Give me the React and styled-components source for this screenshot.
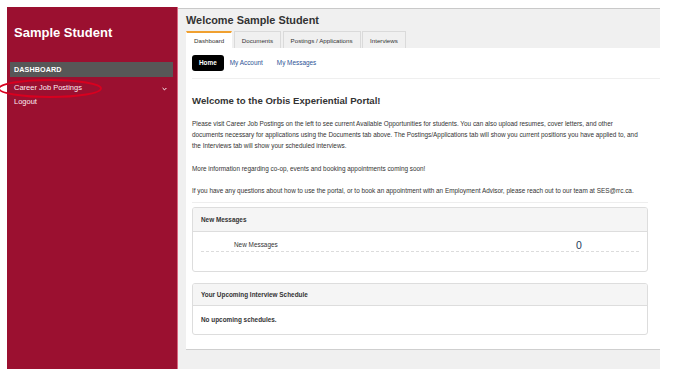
import React from "react";
import styled, { createGlobalStyle } from "styled-components";

const GlobalStyle = createGlobalStyle`
  html, body { margin: 0; padding: 0; background: #ffffff; }
  body { font-family: "Liberation Sans", Arial, sans-serif; color: #333; }
  * { box-sizing: border-box; }
`;

const Page = styled.div`
  position: relative;
  display: flex;
  align-items: stretch;
  height: 369px;
  padding: 7px 0 0 7px;
  overflow: hidden;
`;

const Sidebar = styled.aside`
  width: 171px;
  flex: none;
  background: #9b1030;
  border-right: 1px solid #d9677f;
  color: #fff;
`;

const SideTitle = styled.h1`
  margin: 0;
  padding: 19px 7px 0;
  font-size: 13px;
  line-height: 14px;
  font-weight: bold;
  color: #fff;
`;

const SideSection = styled.div`
  margin: 22px 4px 3px 3px;
  height: 15px;
  background: #575757;
  padding-left: 4px;
  font-size: 7.2px;
  line-height: 15px;
  font-weight: bold;
  letter-spacing: 0.1px;
  color: #fff;
`;

const SideLink = styled.a`
  display: flex;
  align-items: center;
  justify-content: space-between;
  height: 14px;
  padding: 0 10px 0 7px;
  font-size: 7.5px;
  color: #fbeef1;
  text-decoration: none;
`;

const Chevron = styled.svg`
  width: 5px;
  height: 4px;
  margin-top: 3px;
`;

const Annotation = styled.svg`
  position: absolute;
  left: -6px;
  top: 78px;
  width: 110px;
  height: 21px;
  pointer-events: none;
`;

const Main = styled.main`
  width: 482px;
  flex: none;
  margin-top: 1px;
  background: #f0f0f0;
  border-top: 1px solid #c9c9c9;
  padding-left: 8px;
  display: flex;
  flex-direction: column;
`;

const PageTitle = styled.h2`
  margin: 0;
  padding-top: 4px;
  font-size: 10.9px;
  line-height: 14px;
  font-weight: bold;
  color: #333;
`;

const Tabs = styled.nav`
  display: flex;
  gap: 1.5px;
  margin-top: 4px;
  height: 17px;
`;

const Tab = styled.div`
  height: 17px;
  padding: 0 7px;
  font-size: 6.2px;
  line-height: ${(p) => (p.$active ? "16px" : "18px")};
  color: #333;
  background: ${(p) => (p.$active ? "#fff" : "#f0f0f0")};
  border: 1px solid #dadada;
  border-bottom: none;
  border-top: ${(p) => (p.$active ? "2px solid #f0a030" : "1px solid #dadada")};
  ${(p) => p.$active && "border-left-color: #fff; border-right-color: #fff;"}
`;

const Panel = styled.section`
  background: #fff;
  height: 302px;
  padding: 0 12px 0 6px;
  border-bottom: 1px solid #cfcfcf;
`;

const SubNav = styled.div`
  display: flex;
  align-items: center;
  padding: 7px 0 7px;
  margin-right: -12px;
  border-bottom: 1px solid #efefef;
`;

const Pill = styled.a`
  height: 16px;
  padding: 0 ${(p) => (p.$active ? "7px" : "6px")};
  margin-right: ${(p) => (p.$active ? "0" : "2px")};
  border-radius: 3px;
  font-size: 6.4px;
  line-height: 16px;
  background: ${(p) => (p.$active ? "#000" : "transparent")};
  color: ${(p) => (p.$active ? "#fff" : "#2d5496")};
  font-weight: ${(p) => (p.$active ? "bold" : "normal")};
  text-decoration: none;
`;

const Heading = styled.h3`
  margin: 15px 0 11px;
  font-size: 9.6px;
  line-height: 13px;
  font-weight: bold;
  color: #333;
`;

const Para = styled.p`
  margin: 0 0 11px;
  font-size: 6.4px;
  line-height: 11.2px;
  color: #333;
  white-space: nowrap;
`;

const Rule = styled.hr`
  margin: -5px 0 4px;
  border: none;
  border-top: 1px solid #eeeeee;
`;

const Card = styled.div`
  border: 1px solid #dddddd;
  border-radius: 3px;
  margin-bottom: ${(p) => p.$mb || 0}px;
  overflow: hidden;
`;

const CardHead = styled.div`
  height: ${(p) => p.$h}px;
  background: #f5f5f5;
  border-bottom: 1px solid #dddddd;
  padding-left: 8px;
  font-size: 6.4px;
  line-height: ${(p) => p.$h - 1}px;
  font-weight: bold;
  color: #333;
`;

const CardBody = styled.div`
  padding: ${(p) => p.$pad};
  font-size: 6.4px;
  color: #333;
`;

const StatRow = styled.div`
  display: grid;
  grid-template-columns: 1fr 120px;
  align-items: center;
  height: 14px;
  border-bottom: 1px dashed #dcdcdc;
`;

const StatLabel = styled.span`
  padding-left: 33px;
  font-size: 6.4px;
  color: #333;
`;

const StatValue = styled.span`
  text-align: center;
  font-size: 10.5px;
  color: #1e3a5c;
`;

const Empty = styled.div`
  font-weight: bold;
  line-height: 28px;
`;

export default function App() {
  return (
    <>
      <GlobalStyle />
      <Page>
        <Sidebar>
          <SideTitle>Sample Student</SideTitle>
          <SideSection>DASHBOARD</SideSection>
          <SideLink href="#">
            Career Job Postings
            <Chevron viewBox="0 0 5 4">
              <path d="M0.6 1 L2.5 2.9 L4.4 1" fill="none" stroke="#fff" strokeWidth="1" />
            </Chevron>
          </SideLink>
          <SideLink href="#">Logout</SideLink>
        </Sidebar>
        <Main>
          <PageTitle>Welcome Sample Student</PageTitle>
          <Tabs>
            <Tab $active>Dashboard</Tab>
            <Tab>Documents</Tab>
            <Tab>Postings / Applications</Tab>
            <Tab>Interviews</Tab>
          </Tabs>
          <Panel>
            <SubNav>
              <Pill $active href="#">Home</Pill>
              <Pill href="#">My Account</Pill>
              <Pill href="#">My Messages</Pill>
            </SubNav>
            <Heading>Welcome to the Orbis Experiential Portal!</Heading>
            <Para>
              Please visit Career Job Postings on the left to see current Available Opportunities for students. You can also upload resumes, cover letters, and other
              <br />
              documents necessary for applications using the Documents tab above. The Postings/Applications tab will show you current positions you have applied to, and
              <br />
              the Interviews tab will show your scheduled interviews.
            </Para>
            <Para>More information regarding co-op, events and booking appointments coming soon!</Para>
            <Para>
              If you have any questions about how to use the portal, or to book an appointment with an Employment Advisor, please reach out to our team at SES@rrc.ca.
            </Para>
            <Rule />
            <Card $mb={11}>
              <CardHead $h={24}>New Messages</CardHead>
              <CardBody $pad="6px 8px 19px">
                <StatRow>
                  <StatLabel>New Messages</StatLabel>
                  <StatValue>0</StatValue>
                </StatRow>
              </CardBody>
            </Card>
            <Card>
              <CardHead $h={22}>Your Upcoming Interview Schedule</CardHead>
              <CardBody $pad="0 8px">
                <Empty>No upcoming schedules.</Empty>
              </CardBody>
            </Card>
          </Panel>
        </Main>
        <Annotation viewBox="0 0 110 21">
          <ellipse cx="56" cy="10.5" rx="51" ry="8.5" fill="none" stroke="#d8001f" strokeWidth="1.8" />
        </Annotation>
      </Page>
    </>
  );
}
